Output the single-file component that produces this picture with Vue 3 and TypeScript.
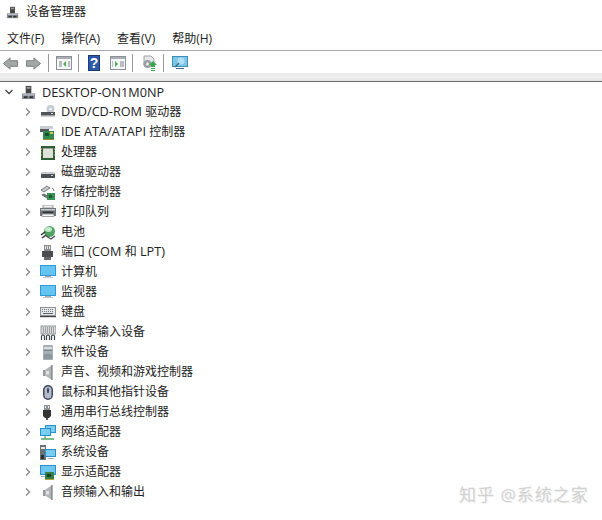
<script setup lang="ts">
interface Row { label: string; icon: string }

const icons: Record<string, string> = {
  pc: '<rect x="5" y="1" width="6" height="8" fill="#444"/><rect x="6" y="2" width="4" height="2" fill="#999"/><rect x="1" y="9" width="14" height="6" fill="#8a8f96"/><rect x="2" y="10" width="12" height="1" fill="#ccd"/><rect x="3" y="12" width="4" height="2" fill="#333"/><rect x="9" y="12" width="4" height="2" fill="#333"/>',
  dvd: '<circle cx="10.500" cy="4" r="4" fill="#c4ccd2"/><circle cx="10.500" cy="4" r="1.300" fill="#f4f6f8"/><rect x="1" y="7" width="14" height="3" fill="#4f5458"/><rect x="1" y="10" width="14" height="1.500" fill="#9aa0a4"/><rect x="11" y="8" width="2" height="1" fill="#dfe3e6"/>',
  ide: '<rect x="0" y="1" width="13" height="3" fill="#c9ced2"/><rect x="0" y="4" width="9" height="3" fill="#55595d"/><rect x="3" y="6" width="11" height="8" fill="#2f8a4c"/><rect x="5" y="8" width="4" height="3" fill="#1d4d2e"/><rect x="10" y="7" width="3" height="2" fill="#e2c14a"/><rect x="3" y="14" width="11" height="1" fill="#9b8c3a"/>',
  cpu: '<rect x="1" y="1" width="14" height="14" fill="#2d5e34"/><rect x="3" y="3" width="10" height="10" fill="#e0e2dc"/><rect x="3" y="3" width="10" height="1" fill="#9aa39a"/><path d="M1 4h1M1 7h1M1 10h1M14 4h1M14 7h1M14 10h1" stroke="#d4c46a"/>',
  disk: '<rect x="1" y="7" width="14" height="2" fill="#c8ccd0"/><rect x="1" y="9" width="14" height="4" fill="#4b4f53"/><rect x="11" y="10" width="2" height="1" fill="#cfd3d6"/>',
  storage: '<path d="M1 5 7 1l3 2-6 4z" fill="#c4c8cc" stroke="#555" stroke-width=".7"/><path d="M2 10l5 3 2-1-5-3z" fill="#7a7f84" stroke="#444" stroke-width=".7"/><rect x="7" y="8" width="8" height="7" fill="#3a9155"/><rect x="9" y="10" width="3" height="3" fill="#1f5530"/><path d="M12 3a3 3 0 0 1 2 3" stroke="#777" fill="none"/>',
  printer: '<rect x="3" y="0" width="10" height="3" fill="#f0f2f3" stroke="#777" stroke-width=".7"/><rect x="0" y="3" width="16" height="8" fill="#6d757a"/><rect x="1" y="4" width="14" height="1.500" fill="#c3c9cc"/><rect x="3" y="6.500" width="10" height="1.500" fill="#2f3336"/><rect x="2" y="9" width="12" height="2.500" fill="#f7f7f7" stroke="#666" stroke-width=".6"/>',
  battery: '<circle cx="9.500" cy="6.500" r="5.500" fill="#4fa263"/><ellipse cx="8.500" cy="4.500" rx="3.500" ry="2.400" fill="#c4e8ca"/><path d="M1 10l4-3M2 13l4-3" stroke="#333" stroke-width="1.500"/><path d="M6 11l5 3 4-3" stroke="#4a4f53" stroke-width="1.400" fill="none"/>',
  port: '<rect x="4" y="0" width="7" height="6" fill="#8a8d90"/><path d="M5.500 1v3M7.500 1v3M9.500 1v3" stroke="#e4e4e4"/><rect x="2" y="6" width="11" height="6" fill="#4a4c4f"/><rect x="4" y="12" width="7" height="3" fill="#66696c"/>',
  monitor: '<rect x="0" y="0" width="16" height="11" fill="#2f9ad6"/><rect x="1" y="1" width="14" height="9" fill="#63c4f2"/><rect x="5" y="11" width="6" height="1" fill="#a7adb2"/><rect x="3" y="12" width="10" height="1" fill="#c5c9cc"/>',
  keyboard: '<rect x="0.500" y="2.500" width="15" height="8" fill="#e4e6e8" stroke="#767c80" stroke-width=".8"/><path d="M2 4.500h12M2 6.500h12" stroke="#74797d" stroke-dasharray="1 1"/><path d="M3 8.500h10" stroke="#666"/><rect x="0" y="11" width="16" height="1.200" fill="#444"/>',
  hid: '<rect x="1" y="1" width="15" height="8" fill="#d7dadd" stroke="#6f7579" stroke-width=".7"/><path d="M3 3h11M3 5h11M3 7h11" stroke="#666" stroke-dasharray="1 1"/><path d="M1.500 15v-4q1.500-2 3 0v4M6.500 15v-4q1.500-2 3 0v4M11.500 15v-4q1.500-2 3 0v4" fill="none" stroke="#40454a" stroke-width="1.200"/>',
  soft: '<rect x="3" y="0" width="10" height="15" rx="1" fill="#a3b0b6"/><rect x="4" y="2" width="8" height="2" fill="#d8dde0"/><rect x="4" y="5" width="8" height="1" fill="#7f8a90"/><rect x="4" y="9" width="8" height="5" fill="#8b989e"/>',
  sound: '<rect x="3" y="5" width="2" height="6" fill="#999"/><path d="M5 5 12 0v15l-7-4.500z" fill="#b2b6b8"/><path d="M12 0v15" stroke="#62666a"/><rect x="6" y="6" width="3" height="3.500" fill="#dfe1e2"/>',
  mouse: '<rect x="3" y="0" width="10" height="15" rx="5" fill="#3d4a66"/><rect x="4.500" y="1.500" width="7" height="12" rx="3.500" fill="#b5bcc8"/><rect x="7" y="3" width="2" height="5" rx="1" fill="#3d4a66"/>',
  usb: '<rect x="4" y="0" width="6" height="5" fill="#8d9297"/><rect x="5" y="1" width="1" height="2" fill="#eee"/><rect x="8" y="1" width="1" height="2" fill="#eee"/><path d="M3 5h8v6l-2 2H5l-2-2z" fill="#333"/><rect x="6" y="13" width="2" height="2" fill="#555"/>',
  net: '<rect x="5" y="0" width="11" height="8" fill="#2b8fca"/><rect x="6" y="1" width="9" height="6" fill="#79cdf2"/><rect x="0" y="3" width="11" height="8" fill="#2b8fca"/><rect x="1" y="4" width="9" height="6" fill="#79cdf2"/><path d="M5 11v2M1 14h13M5 13v1" stroke="#52a564" stroke-width="1.300"/>',
  sys: '<rect x="0" y="0" width="6" height="15" fill="#6b7175"/><rect x="1" y="2" width="4" height="2" fill="#e4e6e8"/><rect x="1" y="10" width="3" height="4" fill="#2d2f31"/><rect x="5" y="4" width="11" height="8" fill="#2b8fca"/><rect x="6" y="5" width="9" height="6" fill="#79cdf2"/><rect x="8" y="13" width="6" height="1" fill="#a7adb2"/>',
  display: '<rect x="0" y="0" width="16" height="10" fill="#2b8fca"/><rect x="1" y="1" width="14" height="8" fill="#6dc7f0"/><rect x="5" y="7" width="9" height="7" fill="#347f47"/><rect x="7" y="9" width="4" height="3" fill="#1c3f26"/><rect x="5" y="14" width="9" height="1" fill="#b49f38"/><rect x="1" y="11" width="4" height="1" fill="#a7adb2"/>',
}

const rows: Row[] = [
  { label: 'DVD/CD-ROM 驱动器', icon: 'dvd' },
  { label: 'IDE ATA/ATAPI 控制器', icon: 'ide' },
  { label: '处理器', icon: 'cpu' },
  { label: '磁盘驱动器', icon: 'disk' },
  { label: '存储控制器', icon: 'storage' },
  { label: '打印队列', icon: 'printer' },
  { label: '电池', icon: 'battery' },
  { label: '端口 (COM 和 LPT)', icon: 'port' },
  { label: '计算机', icon: 'monitor' },
  { label: '监视器', icon: 'monitor' },
  { label: '键盘', icon: 'keyboard' },
  { label: '人体学输入设备', icon: 'hid' },
  { label: '软件设备', icon: 'soft' },
  { label: '声音、视频和游戏控制器', icon: 'sound' },
  { label: '鼠标和其他指针设备', icon: 'mouse' },
  { label: '通用串行总线控制器', icon: 'usb' },
  { label: '网络适配器', icon: 'net' },
  { label: '系统设备', icon: 'sys' },
  { label: '显示适配器', icon: 'display' },
  { label: '音频输入和输出', icon: 'sound' },
]
const menus = ['文件(F)', '操作(A)', '查看(V)', '帮助(H)']

function runs(label: string): string[] {
  return label.split(/([\x20-\x7e]+)/).filter(Boolean)
}
function isLatin(run: string): boolean {
  return /^[\x20-\x7e]+$/.test(run)
}
</script>

<template>
  <div class="win">
    <header class="title">
      <svg class="title-ico" viewBox="0 0 16 16" v-html="icons.pc"></svg>
      <span>设备管理器</span>
    </header>
    <nav class="menu">
      <span v-for="m in menus" :key="m">{{ m }}</span>
    </nav>
    <div class="toolbar">
      <svg class="arrow" viewBox="0 0 17 16"><path d="M1 8 8 2v3h8v6H8v3z" fill="#a3a8a6" stroke="#777c7a"/></svg>
      <svg class="arrow arrow2" viewBox="0 0 17 16"><path d="M16 8 9 2v3H1v6h8v3z" fill="#a3a8a6" stroke="#777c7a"/></svg>
      <i class="sep"></i>
      <svg class="tb ml7" viewBox="0 0 16 16"><rect x=".5" y="1.500" width="15" height="13" fill="#f6f7f7" stroke="#8a9096"/><rect x="1" y="2" width="14" height="2" fill="#a9afb5"/><path d="M3 7h3M3 9h3M3 11h3M12 7h2M12 9h2M12 11h2" stroke="#7d8388"/><path d="M10 6v6L7 9z" fill="#49b04f"/></svg>
      <i class="sep"></i>
      <svg class="help" viewBox="0 0 12 16"><rect x=".5" y=".5" width="11" height="15" fill="#2c5aa8" stroke="#1e3a70"/><text x="6" y="13" text-anchor="middle" class="q">?</text></svg>
      <svg class="tb ml10" viewBox="0 0 16 16"><rect x=".5" y="1.500" width="15" height="13" fill="#f6f7f7" stroke="#8a9096"/><rect x="1" y="2" width="14" height="2" fill="#a9afb5"/><path d="M10 7h4M10 9h4M10 11h4M2 7h1M2 9h1M2 11h1" stroke="#7d8388"/><path d="M5 6v6l3-3z" fill="#49b04f"/></svg>
      <i class="sep"></i>
      <svg class="tb ml8" viewBox="0 0 16 16"><path d="M3 1h7l3 3v6H3z" fill="#e6e8ea" stroke="#9ea3a7"/><circle cx="6.500" cy="9" r="4" fill="#9ba0a4"/><circle cx="6.500" cy="9" r="1.500" fill="#eee"/><path d="M12 6l4 4h-2v2h-4v-2H8z" fill="#39a84f"/><path d="M10 13h4v1h-4zM10 15h4v1h-4z" fill="#39a84f"/></svg>
      <i class="sep"></i>
      <svg class="tb ml8" viewBox="0 0 16 16"><rect x=".5" y="1.500" width="15" height="10" fill="#7cc6e6" stroke="#3d8eb5"/><circle cx="9" cy="6" r="3.500" fill="#b2e0f3"/><path d="M7 8 3 12" stroke="#3d6e85" stroke-width="1.500"/><path d="M4 13h8v1H4z" fill="#3d6e85"/></svg>
    </div>
    <div class="bands"></div>
    <main class="tree">
      <div class="row root">
        <svg class="chev" viewBox="0 0 8 8"><path d="M.5 2 4 5.500 7.500 2" fill="none" stroke="#444" stroke-width="1.300"/></svg>
        <svg class="ico16" viewBox="0 0 16 16" v-html="icons.pc"></svg>
        <span class="lbl lat">DESKTOP-ON1M0NP</span>
      </div>
      <div v-for="r in rows" :key="r.label" class="row child">
        <svg class="chev" viewBox="0 0 8 8"><path d="M2 .5 5.500 4 2 7.500" fill="none" stroke="#8a8a8a" stroke-width="1.300"/></svg>
        <svg class="ico16" viewBox="0 0 16 16" v-html="icons[r.icon]"></svg>
        <span class="lbl"><span v-for="(t, i) in runs(r.label)" :key="i" :class="{ lat: isLatin(t) }">{{ t }}</span></span>
      </div>
    </main>
    <div class="mark">知乎 @系统之家</div>
  </div>
</template>

<style scoped>
.win {
  position: relative;
  width: 602px;
  height: 520px;
  overflow: hidden;
  background: #fff;
  color: #222;
  font: 12px/16px "Open Sans", "Noto Sans CJK SC", sans-serif;
}
.title { height: 24px; display: flex; align-items: center; gap: 7px; padding-left: 6px; box-sizing: border-box; }
.title-ico { width: 13px; height: 15px; flex: none; }
.menu { height: 22px; display: flex; gap: 17px; align-items: center; padding: 4px 7px 0; border-bottom: 1px solid #a9a9a9; }
.toolbar { height: 20px; display: flex; align-items: center; padding: 2px 0 0 2px; }
.tb { width: 16px; height: 16px; flex: none; }
.arrow { width: 17px; height: 15px; flex: none; }
.arrow2 { margin-left: 6px; }
.sep { width: 1px; height: 18px; background: #9a9a9a; margin-left: 6px; flex: none; }
.help { width: 12px; height: 16px; margin-left: 9px; flex: none; }
.ml7 { margin-left: 7px; }
.ml8 { margin-left: 8px; }
.ml10 { margin-left: 10px; }
.q { font: bold 14px "Liberation Sans", sans-serif; fill: #fff; }
.bands { height: 8px; background: linear-gradient(#e9e9e9, #f0f0f0 50%, #e2e2e2); border-bottom: 1px solid #6a6a6a; }
.row { height: 20px; display: flex; align-items: center; }
.root { padding-left: 5px; }
.child { padding-left: 24px; }
.chev { width: 8px; height: 8px; flex: none; }
.ico16 { width: 16px; height: 16px; flex: none; margin-top: 2px; }
.root .ico16 { margin-left: 8px; width: 15px; height: 15px; margin-top: 0; }
.root .lbl { margin-left: 6px; }
.child .ico16 { margin-left: 8px; }
.child .lbl { margin-left: 5px; }
.lbl { white-space: pre; }
.lat { font-size: 12.700px; }
.child .lat { line-height: 0; }
.mark { position: absolute; left: 459px; top: 484px; font-size: 17px; line-height: 22px; letter-spacing: 1px; color: #d2d2d2; text-shadow: 1px 1px 0 #efefef; }
</style>
